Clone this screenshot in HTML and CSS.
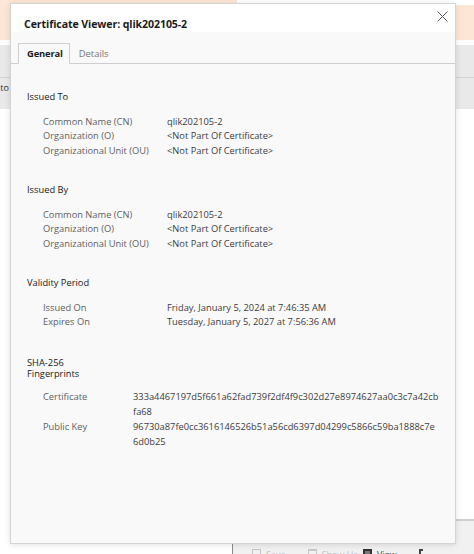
FILE: index.html
```html
<!DOCTYPE html>
<html lang="en">
<head>
<meta charset="utf-8">
<title>Certificate Viewer</title>
<link rel="stylesheet" href="styles.css">
</head>
<body>
<div class="backdrop">
  <div class="bg-top"><div class="bg-orange-l"></div><div class="bg-orange-r"></div></div>
  <div class="bg-gap"></div>
  <div class="bg-bar"></div>
  <div class="bg-bar bg-bar2"><span class="bg-cut">Go to</span></div>
  <div class="bg-fill"></div>
  <div class="bg-toolbar">
    <span class="tb-item"><span class="tb-ico tb-sq"></span><span class="tb-txt">Save</span></span>
    <span class="tb-item"><span class="tb-ico tb-bin"></span><span class="tb-txt">Show Us</span></span>
    <span class="tb-item tb-dark"><span class="tb-ico tb-box"></span><span class="tb-txt">View</span></span>
    <span class="tb-item"><span class="tb-ico tb-br"></span></span>
  </div>
</div>

<div class="dialog">
  <div class="dlg-head">
    <div class="dlg-title">Certificate Viewer: qlik202105-2</div>
    <svg class="dlg-close" viewBox="0 0 11 11" width="11" height="11"><path d="M0.5 0.5 L10.5 10.5 M10.5 0.5 L0.5 10.5" stroke="#5a5a5a" stroke-width="1" fill="none"/></svg>
  </div>
  <div class="tabs">
    <div class="tab active">General</div>
    <div class="tab">Details</div>
  </div>
  <div class="content">
    <section class="sec">
      <h3 class="sec-h">Issued To</h3>
      <div class="rows">
        <div class="lbl">Common Name (CN)</div><div class="val">qlik202105-2</div>
        <div class="lbl">Organization (O)</div><div class="val">&lt;Not Part Of Certificate&gt;</div>
        <div class="lbl">Organizational Unit (OU)</div><div class="val">&lt;Not Part Of Certificate&gt;</div>
      </div>
    </section>
    <section class="sec">
      <h3 class="sec-h">Issued By</h3>
      <div class="rows">
        <div class="lbl">Common Name (CN)</div><div class="val">qlik202105-2</div>
        <div class="lbl">Organization (O)</div><div class="val">&lt;Not Part Of Certificate&gt;</div>
        <div class="lbl">Organizational Unit (OU)</div><div class="val">&lt;Not Part Of Certificate&gt;</div>
      </div>
    </section>
    <section class="sec">
      <h3 class="sec-h">Validity Period</h3>
      <div class="rows">
        <div class="lbl">Issued On</div><div class="val">Friday, January 5, 2024 at 7:46:35 AM</div>
        <div class="lbl">Expires On</div><div class="val">Tuesday, January 5, 2027 at 7:56:36 AM</div>
      </div>
    </section>
    <section class="sec">
      <h3 class="sec-h sec-h2">SHA-256<br>Fingerprints</h3>
      <div class="rows rows-fp">
        <div class="lbl">Certificate</div><div class="val hex">333a4467197d5f661a62fad739f2df4f9c302d27e8974627aa0c3c7a42cbfa68</div>
        <div class="lbl">Public Key</div><div class="val hex">96730a87fe0cc3616146526b51a56cd6397d04299c5866c59ba1888c7e6d0b25</div>
      </div>
    </section>
  </div>
</div>
</body>
</html>
```

FILE: styles.css
```css
html, body {
  margin: 0;
  padding: 0;
}
body {
  width: 474px;
  height: 554px;
  overflow: hidden;
  background: #ffffff;
  font-family: "Open Sans", "Noto Sans", sans-serif;
  position: relative;
}

/* page behind the dialog */
.backdrop {
  height: 554px;
  display: flex;
  flex-direction: column;
}
.bg-top {
  height: 40px;
  display: flex;
}
.bg-orange-l {
  width: 237px;
  background: #fde6d5;
}
.bg-orange-r {
  flex: 1;
  margin-top: 5px;
  background: #fde6d5;
}
.bg-gap {
  height: 5px;
}
.bg-bar {
  height: 32px;
  background: #e9e9e9;
  border-bottom: 1px solid #d2d2d2;
}
.bg-bar2 {
  height: 31px;
  border-bottom: 0;
  overflow: hidden;
}
.bg-cut {
  display: block;
  width: 9px;
  overflow: hidden;
  direction: rtl;
  white-space: nowrap;
  font-size: 9px;
  color: #333;
  line-height: 12px;
  padding-top: 4px;
}
.bg-fill {
  flex: 1;
}
.bg-toolbar {
  height: 35px;
  margin-left: 232px;
  border-top: 2px solid #cfcfcf;
  border-left: 1px solid #8a8a8a;
  background: #f1f1f1;
  display: flex;
  align-items: flex-end;
  padding-left: 19px;
  box-sizing: border-box;
}
.tb-item {
  display: flex;
  align-items: flex-start;
  gap: 5px;
  height: 9px;
  width: 64px;
  margin-bottom: -4px;
  color: #c2c2c2;
  font-size: 9px;
  line-height: 12px;
}
.tb-dark { color: #444; }
.tb-ico {
  width: 9px;
  height: 10px;
  box-sizing: border-box;
}
.tb-sq { border: 1px solid #c4c4c4; }
.tb-bin { border: 1px solid #c8c8c8; border-top-width: 2px; }
.tb-box { border: 2px solid #333; background: #777; }
.tb-br { border: 2px solid #444; border-right: 0; width: 4px; }
.tb-txt { font-size: 9px; }

/* dialog */
.dialog {
  position: absolute;
  left: 10px;
  top: 3px;
  width: 446px;
  height: 541px;
  box-sizing: border-box;
  border: 1px solid #d4d4d4;
  background: #f9f9f9;
  box-shadow: 0 1px 6px rgba(0, 0, 0, 0.12);
  display: flex;
  flex-direction: column;
}
.dlg-head {
  height: 28px;
  flex: none;
  background: #ffffff;
  display: flex;
  justify-content: space-between;
  align-items: flex-start;
  padding: 0 7px 0 13px;
}
.dlg-title {
  padding-top: 13px;
  font-size: 10.6px;
  font-weight: 700;
  line-height: 14px;
  color: #1b1b1b;
  letter-spacing: -0.1px;
}
.dlg-close {
  margin-top: 7px;
  display: block;
}
.tabs {
  height: 31px;
  flex: none;
  border-bottom: 1px solid #cfcfcf;
  display: flex;
  align-items: flex-end;
  padding-left: 7px;
  gap: 9px;
}
.tab {
  height: 20px;
  line-height: 20px;
  font-size: 9.4px;
  color: #777;
  margin-bottom: -1px;
}
.tab.active {
  color: #1b1b1b;
  font-weight: 700;
  padding: 0 6px 0 8px;
  border: 1px solid #cfcfcf;
  border-bottom: 1px solid #f9f9f9;
  background: #f9f9f9;
  box-sizing: border-box;
  height: 21px;
  line-height: 19px;
  letter-spacing: -0.15px;
}

.content {
  padding: 26px 16px 0 16px;
  display: flex;
  flex-direction: column;
  gap: 25px;
}
.sec-h {
  margin: 0;
  font-size: 9.3px;
  font-weight: 400;
  color: #202020;
  line-height: 14px;
}
.sec-h2 {
  line-height: 11px;
  padding: 2px 0 0;
}
.rows {
  margin-top: 10.5px;
  margin-left: 16px;
  display: grid;
  grid-template-columns: 124px 1fr;
  font-size: 9.3px;
  line-height: 14.5px;
}
.rows-fp {
  grid-template-columns: 90px 306px;
  line-height: 15px;
}
.lbl {
  color: #606060;
}
.val {
  color: #3c3c3c;
}
.hex {
  word-break: break-all;
}
```
